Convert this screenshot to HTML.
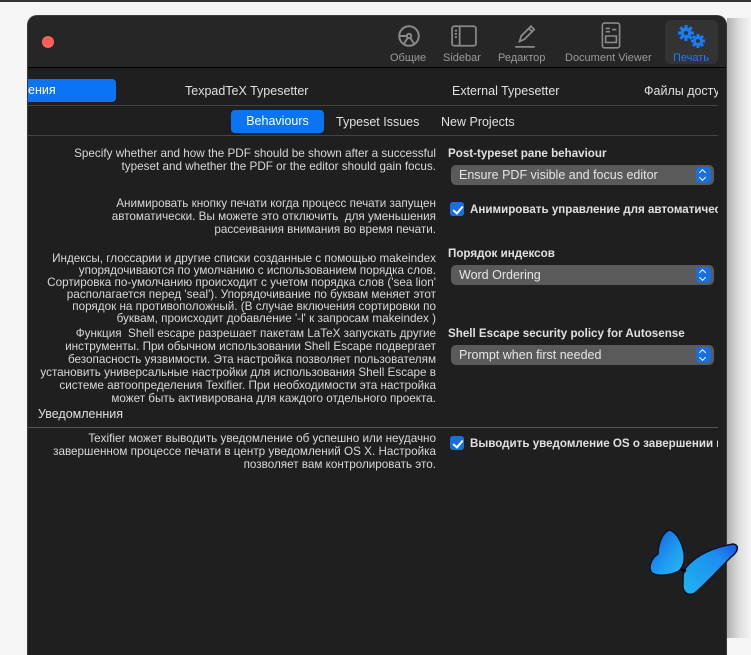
<!DOCTYPE html>
<html><head><meta charset="utf-8"><style>
*{margin:0;padding:0;box-sizing:border-box}
body{width:751px;height:638px;background:#f5f5f5;position:relative;overflow:hidden;font-family:"Liberation Sans","DejaVu Sans",sans-serif;}
.topline{position:absolute;left:0;top:0;width:751px;height:2px;background:#333}
.shadow{position:absolute;left:727px;top:18px;width:24px;height:620px;background:linear-gradient(90deg,#b0b0b0,#dedede 50%,#f5f5f5)}
.win{position:absolute;left:27px;top:15px;width:700px;height:640px;background:#1f1f1f;border-radius:10px 10px 0 0;overflow:hidden;border:1px solid #3a3a3a;border-bottom:none}
.tb{position:absolute;left:0;top:0;width:700px;height:52px;background:#262626;border-bottom:1px solid #000}
.a{position:absolute;white-space:nowrap}
.lbl{font-size:11px;color:#9a9a9a;top:36px}
.t{color:#d8d8d8;font-size:11.7px;line-height:13px;text-align:right;right:290px}
.h{color:#e0e0e0;font-size:11.6px;font-weight:bold;left:420px}
.sel{position:absolute;left:423px;width:263px;height:20px;background:#5a5a5a;border-radius:5px;color:#e6e6e6;font-size:12.5px;line-height:20px;padding-left:8px}
.sel i{position:absolute;right:3px;top:2px;width:15px;height:16px;background:#1a6fe0;border-radius:4px}
.sel i:before{content:"";position:absolute;left:4px;top:3px;width:4px;height:4px;border-left:1.5px solid #fff;border-top:1.5px solid #fff;transform:rotate(45deg)}
.sel i:after{content:"";position:absolute;left:4px;top:8px;width:4px;height:4px;border-right:1.5px solid #fff;border-bottom:1.5px solid #fff;transform:rotate(45deg)}
.cb{position:absolute;left:422px;width:14px;height:14px;background:#1a6fe0;border-radius:3px}
.cb:after{content:"";position:absolute;left:4.5px;top:1.5px;width:4px;height:8px;border-right:2px solid #fff;border-bottom:2px solid #fff;transform:rotate(40deg)}
.sep{position:absolute;left:0;width:700px;height:1px;background:#444}
</style></head><body>
<div class="topline"></div>
<div class="shadow"></div>
<div class="win">
 <div class="tb">
  <div class="a" style="left:14px;top:20px;width:12px;height:12px;border-radius:50%;background:#fe5f57"></div>
  <div class="a" style="left:637px;top:4px;width:53px;height:44px;background:#333;border-radius:6px"></div>
  <svg class="a" style="left:368px;top:7px" width="26" height="26" viewBox="0 0 24 24" fill="none" stroke="#8a8a8a" stroke-width="1.8"><circle cx="12" cy="12" r="9"/><circle cx="12" cy="12" r="2"/><path d="M10.5 12H3.5M13 13.5l4 6M11 13.5l-4 6"/></svg>
  <svg class="a" style="left:423px;top:9px" width="26" height="22" viewBox="0 0 24 20" fill="none" stroke="#8a8a8a" stroke-width="1.6"><rect x="1" y="1" width="22" height="18" rx="2"/><path d="M8 1v18M3.5 5h2M3.5 8h2M3.5 11h2"/></svg>
  <svg class="a" style="left:484px;top:7px" width="26" height="26" viewBox="0 0 24 24" fill="none" stroke="#8a8a8a" stroke-width="1.6"><path d="M7 17l1.5-5 9-9 3 3-9 9z M15.5 5l3 3"/><path d="M3 22h18"/></svg>
  <svg class="a" style="left:572px;top:6px" width="22" height="28" viewBox="0 0 20 26" fill="none" stroke="#8a8a8a" stroke-width="1.5"><rect x="2" y="1" width="16" height="23" rx="2"/><path d="M5 6h4M5 9h4M11 7h4M5 13h10v6H5z"/></svg>
  <svg class="a" style="left:649px;top:8px" width="30" height="26" viewBox="0 0 30 26"><g fill="#1a7cf5"><circle cx="9" cy="9" r="5.5"/><circle cx="21" cy="17" r="5"/><g stroke="#1a7cf5" stroke-width="3"><path d="M9 1v16M1 9h16M3.3 3.3l11.4 11.4M3.3 14.7l11.4-11.4"/><path d="M21 10v14M14 17h14M16 12l10 10M16 22l10-10"/></g></g><circle cx="9" cy="9" r="2" fill="#333"/><circle cx="21" cy="17" r="2" fill="#333"/></svg>
  <div class="a lbl" style="left:362px">Общие</div>
  <div class="a lbl" style="left:415px">Sidebar</div>
  <div class="a lbl" style="left:470px">Редактор</div>
  <div class="a lbl" style="left:537px">Document Viewer</div>
  <div class="a lbl" style="left:645px;color:#1a7cf5">Печать</div>
 </div>
 <div class="a" style="left:-8px;top:63px;width:96px;height:23px;background:#0a74f5;border-radius:4px;color:#fff;font-size:12.5px;line-height:23px;padding-left:8px">ения</div>
 <div class="a" style="left:157px;top:68px;color:#e0e0e0;font-size:12.5px">TexpadTeX Typesetter</div>
 <div class="a" style="left:424px;top:68px;color:#e0e0e0;font-size:12.5px">External Typesetter</div>
 <div class="a" style="left:616px;top:68px;color:#e0e0e0;font-size:12.5px">Файлы доступа</div>
 <div class="sep" style="top:89px"></div>
 <div class="a" style="left:203px;top:94px;width:93px;height:23px;background:#0a74f5;border-radius:4px;color:#fff;font-size:12.5px;line-height:23px;text-align:center">Behaviours</div>
 <div class="a" style="left:308px;top:99px;color:#e0e0e0;font-size:12.5px">Typeset Issues</div>
 <div class="a" style="left:413px;top:99px;color:#e0e0e0;font-size:12.5px">New Projects</div>
 <div class="sep" style="top:119px"></div>

 <div class="a t" style="top:131px">Specify whether and how the PDF should be shown after a successful<br>typeset and whether the PDF or the editor should gain focus.</div>
 <div class="a t" style="top:181px">Анимировать кнопку печати когда процесс печати запущен<br>автоматически. Вы можете это отключить&nbsp; для уменьшения<br>рассеивания внимания во время печати.</div>
 <div class="a t" style="top:237px;line-height:12px">Индексы, глоссарии и другие списки созданные с помощью makeindex<br>упорядочиваются по умолчанию с использованием порядка слов.<br>Сортировка по-умолчанию происходит с учетом порядка слов ('sea lion'<br>располагается перед 'seal'). Упорядочивание по буквам меняет этот<br>порядок на противоположный. (В случае включения сортировки по<br>буквам, происходит добавление '-l' к запросам makeindex )</div>
 <div class="a t" style="top:311px">Функция&nbsp; Shell escape разрешает пакетам LaTeX запускать другие<br>инструменты. При обычном использовании Shell Escape подвергает<br>безопасность уязвимости. Эта настройка позволяет пользователям<br>установить универсальные настройки для использования Shell Escape в<br>системе автоопределения Texifier. При необходимости эта настройка<br>может быть активирована для каждого отдельного проекта.</div>
 <div class="a" style="left:10px;top:391px;color:#e0e0e0;font-size:12.5px">Уведомленния</div>
 <div class="sep" style="top:411px;background:#555"></div>
 <div class="a t" style="top:416px">Texifier может выводить уведомление об успешно или неудачно<br>завершенном процессе печати в центр уведомлений OS X. Настройка<br>позволяет вам контролировать это.</div>

 <div class="a h" style="top:131px">Post-typeset pane behaviour</div>
 <div class="sel" style="top:149px">Ensure PDF visible and focus editor<i></i></div>
 <div class="cb" style="top:186px"></div>
 <div class="a h" style="left:442px;top:187px">Анимировать управление для автоматического</div>
 <div class="a h" style="top:231px">Порядок индексов</div>
 <div class="sel" style="top:249px">Word Ordering<i></i></div>
 <div class="a h" style="top:311px">Shell Escape security policy for Autosense</div>
 <div class="sel" style="top:329px">Prompt when first needed<i></i></div>
 <div class="cb" style="top:420px"></div>
 <div class="a h" style="left:442px;top:421px">Выводить уведомление OS о завершении печати</div>
 <div class="a" style="left:690px;width:10px;height:600px;background:#1f1f1f;top:52px"></div>
</div>
<svg class="a" style="left:645px;top:527px" width="100" height="85" viewBox="0 0 100 85">
 <defs><linearGradient id="g" x1="0" y1="0" x2="1" y2="1"><stop offset="0" stop-color="#1358e0"/><stop offset="0.6" stop-color="#1e9ef0"/><stop offset="1" stop-color="#2ab8f0"/></linearGradient>
 <linearGradient id="g2" x1="0" y1="1" x2="1" y2="0"><stop offset="0" stop-color="#20b4ee"/><stop offset="0.7" stop-color="#1c8ef0"/><stop offset="1" stop-color="#1a50e8"/></linearGradient></defs>
 <path d="M24 3 C31 4 37 15 39 26 C40 34 38 40 34 44 C26 48 14 50 7 46 C3 42 5 32 13 27 C13 18 17 6 24 3Z" fill="url(#g)" stroke="#061428" stroke-width="1.5"/>
 <path d="M40 42 C50 28 70 20 88 17 C95 18 93 25 86 30 C74 42 66 52 50 66 C42 70 37 64 38 56 C38 50 38 46 40 42Z" fill="url(#g2)" stroke="#061428" stroke-width="1.5"/>
 <path d="M35 42 L41 44" stroke="#000" stroke-width="3"/>
</svg>
</body></html>
